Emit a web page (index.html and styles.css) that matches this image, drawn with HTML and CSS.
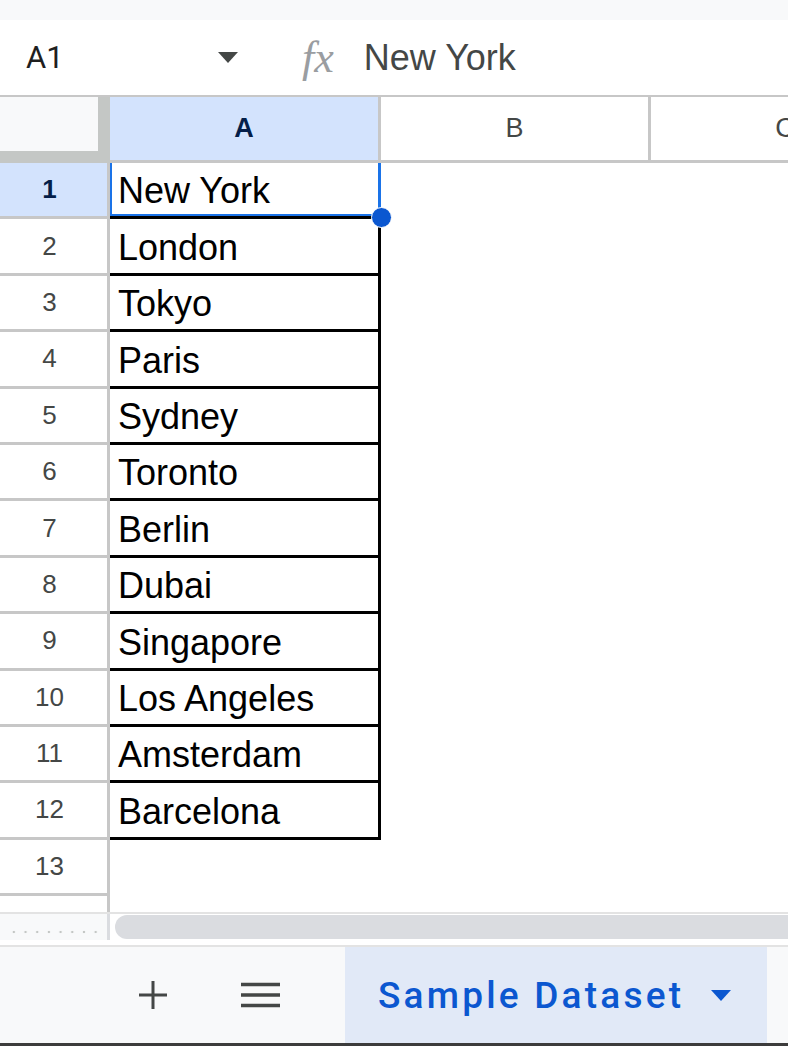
FILE: index.html
```
<!DOCTYPE html>
<html>
<head>
<meta charset="utf-8">
<title>Sheet</title>
<link rel="stylesheet" href="styles.css">
</head>
<body>
<div class="app">
  <div class="topstrip"></div>
  <div class="fbar">
    <div class="namebox"><span class="ref">A1</span><span class="caret"></span></div>
    <span class="fx">fx</span>
    <span class="ftext">New York</span>
  </div>
  <div class="colhdr">
    <div class="corner"><div class="corner-in"></div></div>
    <div class="ch sel">A</div>
    <div class="ch chb">B</div>
    <div class="ch">C</div>
  </div>
  <div class="rows">
    <div class="row"><div class="rn sel">1</div><div class="ca a1">New York<span class="handle"></span></div></div>
    <div class="row"><div class="rn">2</div><div class="ca">London</div></div>
    <div class="row"><div class="rn">3</div><div class="ca">Tokyo</div></div>
    <div class="row"><div class="rn">4</div><div class="ca">Paris</div></div>
    <div class="row"><div class="rn">5</div><div class="ca">Sydney</div></div>
    <div class="row"><div class="rn">6</div><div class="ca">Toronto</div></div>
    <div class="row"><div class="rn">7</div><div class="ca">Berlin</div></div>
    <div class="row"><div class="rn">8</div><div class="ca">Dubai</div></div>
    <div class="row"><div class="rn">9</div><div class="ca">Singapore</div></div>
    <div class="row"><div class="rn">10</div><div class="ca">Los Angeles</div></div>
    <div class="row"><div class="rn">11</div><div class="ca">Amsterdam</div></div>
    <div class="row"><div class="rn">12</div><div class="ca">Barcelona</div></div>
    <div class="row"><div class="rn">13</div><div class="ca empty"></div></div>
    <div class="row"><div class="rn"></div><div class="ca empty"></div></div>
  </div>
  <div class="hscroll">
    <div class="hs-left"><div class="dots"></div></div>
    <div class="thumb"></div>
  </div>
  <div class="gap"></div>
  <div class="tabbar">
    <svg class="plus" width="28" height="28" viewBox="0 0 28 28"><path d="M14 0V28M0 14H28" stroke="#444746" stroke-width="3" fill="none"/></svg>
    <svg class="menu" width="39" height="26" viewBox="0 0 39 26"><path d="M0 2.5H39M0 13H39M0 23.5H39" stroke="#444746" stroke-width="3.5" fill="none"/></svg>
    <div class="tab">
      <span class="tabname">Sample Dataset</span>
      <span class="tabcaret"></span>
    </div>
  </div>
  <div class="bottomstrip"></div>
</div>
</body>
</html>
```

FILE: styles.css
```
* {
  box-sizing: border-box;
  margin: 0;
  padding: 0;
}

html, body {
  margin: 0;
  background: #ffffff;
}

.app {
  width: 788px;
  height: 1046px;
  overflow: hidden;
  display: flex;
  flex-direction: column;
  font-family: "Liberation Sans", Arial, sans-serif;
}

.topstrip {
  flex: none;
  height: 20px;
  background: #f8f9fa;
}

.fbar {
  flex: none;
  height: 77px;
  border-bottom: 2px solid #c7c7c7;
  background: #ffffff;
  display: flex;
  align-items: center;
}

.namebox {
  flex: none;
  width: 238px;
  display: flex;
  align-items: center;
  padding-left: 26px;
}

.ref {
  font-family: Roboto, "Liberation Sans", sans-serif;
  font-size: 31px;
  color: #1f1f1f;
  line-height: 40px;
}

.caret {
  margin-left: auto;
  width: 0;
  height: 0;
  border-left: 10px solid transparent;
  border-right: 10px solid transparent;
  border-top: 11px solid #444746;
}

.fx {
  flex: none;
  margin-left: 64px;
  font-family: "Liberation Serif", "Times New Roman", serif;
  font-style: italic;
  font-size: 44px;
  color: #9a9da1;
  line-height: 40px;
}

.ftext {
  margin-left: 30px;
  font-family: "Liberation Sans", Arial, sans-serif;
  font-size: 36px;
  color: #444746;
  line-height: 40px;
}

.colhdr {
  flex: none;
  height: 66px;
  display: flex;
}

.corner {
  flex: none;
  width: 110px;
  background: #c4c7c5;
}

.corner-in {
  width: 98px;
  height: 54px;
  background: #f8f9fa;
}

.ch {
  flex: none;
  width: 271px;
  border-right: 3px solid #c7c7c7;
  border-bottom: 3px solid #c7c7c7;
  background: #ffffff;
  display: flex;
  align-items: center;
  justify-content: center;
  font-size: 27px;
  color: #444746;
}

.ch.chb {
  width: 270px;
}

.ch.sel {
  background: #d3e3fd;
  color: #041e49;
  font-weight: bold;
}

.rows {
  flex: none;
  height: 749px;
  overflow: hidden;
}

.row {
  display: flex;
  height: 56.4px;
}

.rn {
  flex: none;
  width: 110px;
  border-right: 3px solid #c7c7c7;
  border-bottom: 3px solid #c7c7c7;
  display: flex;
  align-items: center;
  justify-content: center;
  padding-right: 8px;
  font-size: 26px;
  color: #444746;
  background: #ffffff;
}

.rn.sel {
  background: #d3e3fd;
  color: #041e49;
  font-weight: bold;
}

.ca {
  flex: none;
  position: relative;
  width: 271px;
  border-right: 3px solid #000000;
  border-bottom: 3px solid #000000;
  padding: 0 0 5px 8px;
  display: flex;
  align-items: flex-end;
  font-size: 36px;
  line-height: 40px;
  color: #000000;
}

.ca.a1 {
  border-right-color: #1a73e8;
  box-shadow: inset 2px 0 0 #1a73e8, inset 0 -2px 0 #1a73e8;
}

.ca.empty {
  border-color: transparent;
}

.handle {
  position: absolute;
  left: 261px;
  top: 44px;
  width: 21px;
  height: 21px;
  border-radius: 50%;
  background: #0b57d0;
  border: 1.5px solid #ffffff;
  z-index: 2;
}

.hscroll {
  flex: none;
  height: 28px;
  border-top: 2px solid #e3e3e3;
  display: flex;
}

.hs-left {
  flex: none;
  width: 110px;
  background: #f8f9fa;
  border-right: 3px solid #dadce0;
  padding: 16px 8px 0 8px;
}

.dots {
  height: 4px;
  background-image: radial-gradient(circle, #c4c7c5 1px, transparent 1.6px);
  background-size: 11.7px 4px;
  background-repeat: repeat-x;
}

.thumb {
  flex: none;
  width: 720px;
  height: 24px;
  margin: 1px 0 0 5px;
  border-radius: 12px;
  background: #dadce0;
}

.gap {
  flex: none;
  height: 5px;
  background: #ffffff;
}

.tabbar {
  flex: none;
  height: 98px;
  border-top: 2px solid #e3e3e3;
  background: #f8f9fa;
  display: flex;
  align-items: center;
}

.plus {
  flex: none;
  margin-left: 139px;
}

.menu {
  flex: none;
  margin-left: 74px;
}

.tab {
  flex: none;
  align-self: stretch;
  margin-left: 65px;
  width: 422px;
  background: #e1e9f7;
  display: flex;
  align-items: center;
  padding-left: 33px;
}

.tabname {
  font-family: Roboto, "Liberation Sans", sans-serif;
  font-weight: 500;
  font-size: 37px;
  letter-spacing: 3.2px;
  color: #0b57d0;
}

.tabcaret {
  margin-left: auto;
  margin-right: 36px;
  width: 0;
  height: 0;
  border-left: 10px solid transparent;
  border-right: 10px solid transparent;
  border-top: 11px solid #0b57d0;
}

.bottomstrip {
  flex: none;
  height: 3px;
  background: #3c3c3c;
}
```
